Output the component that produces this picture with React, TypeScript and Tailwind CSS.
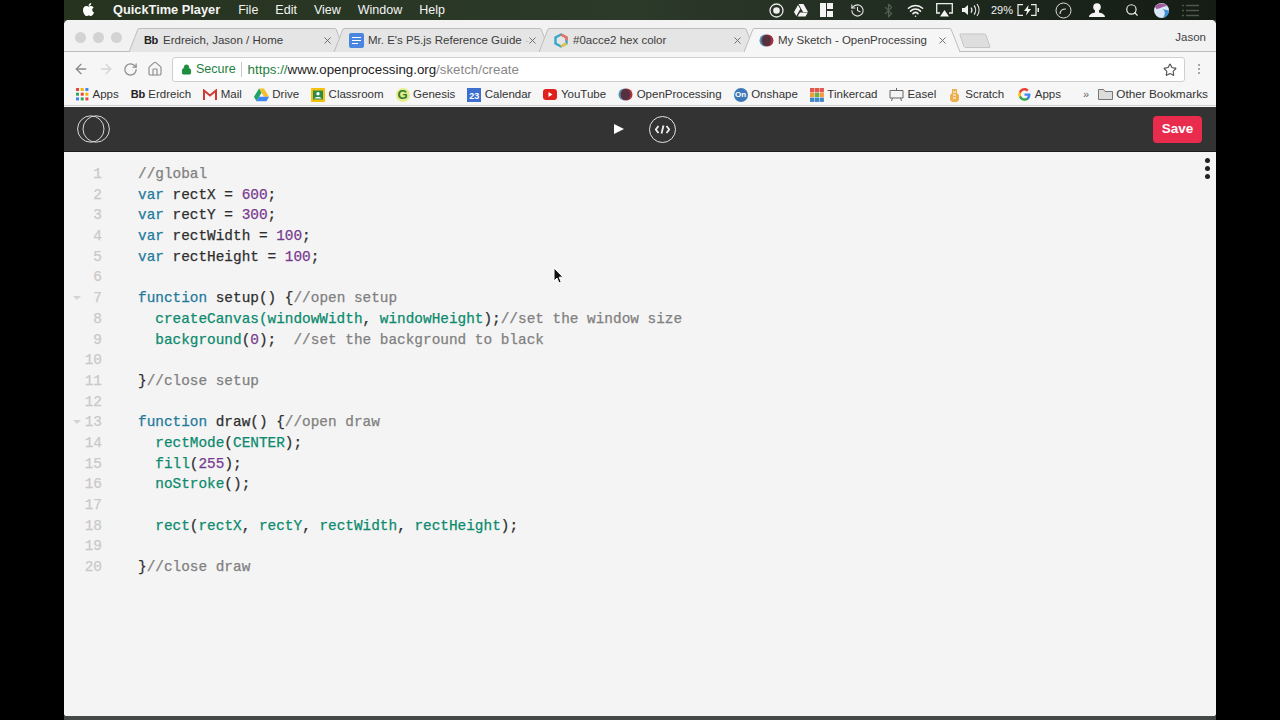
import React from "react";
import { FaApple } from "react-icons/fa";
import { ArrowLeft, ArrowRight, RotateCw, Home, Star, Lock, Wifi, Search, Bluetooth, History, X } from "lucide-react";

const K = "text-[#1f7a9c]";
const N = "text-[#773a8f]";
const F = "text-[#0b8a6d]";
const C = "text-[#808080]";
const D = "text-[#2e2e2e]";

type Seg = [string, string];
const code: Seg[][] = [
  [["//global", C]],
  [["var ", K], ["rectX = ", D], ["600", N], [";", D]],
  [["var ", K], ["rectY = ", D], ["300", N], [";", D]],
  [["var ", K], ["rectWidth = ", D], ["100", N], [";", D]],
  [["var ", K], ["rectHeight = ", D], ["100", N], [";", D]],
  [],
  [["function ", K], ["setup() {", D], ["//open setup", C]],
  [["  createCanvas(windowWidth", F], [", ", D], ["windowHeight", F], [");", D], ["//set the window size", C]],
  [["  background", F], ["(", D], ["0", N], [");  ", D], ["//set the background to black", C]],
  [],
  [["}", D], ["//close setup", C]],
  [],
  [["function ", K], ["draw() {", D], ["//open draw", C]],
  [["  rectMode", F], ["(", D], ["CENTER", F], [");", D]],
  [["  fill", F], ["(", D], ["255", N], [");", D]],
  [["  noStroke", F], ["();", D]],
  [],
  [["  rect", F], ["(", D], ["rectX", F], [", ", D], ["rectY", F], [", ", D], ["rectWidth", F], [", ", D], ["rectHeight", F], [");", D]],
  [],
  [["}", D], ["//close draw", C]],
];

function Tab({ icon, title, suffix, active }: { icon: React.ReactNode; title: string; suffix?: string; active?: boolean }) {
  return (
    <div className={`relative w-[216px] h-[24px] -ml-[11px] first:ml-0 flex items-center pl-[14px] pr-[12px] gap-[4px] ${active ? "z-10" : ""}`}>
      <svg className="absolute inset-0" width="216" height="24" viewBox="0 0 216 24">
        <path d="M0 24 L9 1 Q9.5 0.5 11 0.5 L205 0.5 Q206.5 0.5 207 1 L216 24" fill={active ? "#f6f6f6" : "#e5e5e5"} stroke="#bdbdbd" strokeWidth="1" />
      </svg>
      <span className="relative w-[16px] h-[16px] flex items-center justify-center shrink-0">{icon}</span>
      <span className="relative flex-1 min-w-0 whitespace-nowrap text-[11.500px] text-[#3c3c3c] pt-[1px]">
        {title}
        {suffix && <span className="text-[#c4c4c4]">{suffix}</span>}
      </span>
      <X className="relative shrink-0 text-[#666]" size={11} strokeWidth={2} />
    </div>
  );
}

const OPLogo = () => (
  <svg width="15" height="15" viewBox="0 0 15 15">
    <circle cx="6.500" cy="7.500" r="6" fill="#4d8fb0" />
    <circle cx="8.500" cy="7.500" r="6" fill="#a8323f" />
    <ellipse cx="7.500" cy="7.500" rx="4.600" ry="5.600" fill="#55303f" />
  </svg>
);
const DriveIcon = () => (
  <svg width="15" height="14" viewBox="0 0 15 14">
    <path d="M5 0.500 h5 L15 8.800 h-5z" fill="#f6c02c" />
    <path d="M5 0.500 L0 8.800 L2.500 13.200 L7.500 4.800z" fill="#20a463" />
    <path d="M2.500 13.200 h10 L15 8.800 H5z" fill="#4286f5" />
  </svg>
);
const GIcon = () => (
  <svg width="13" height="13" viewBox="0 0 24 24">
    <path d="M23 12.300c0-.9-.1-1.600-.2-2.300H12v4.400h6.200c-.3 1.500-1.100 2.700-2.300 3.500v2.900h3.700c2.200-2 3.400-5 3.400-8.500z" fill="#4285f4" />
    <path d="M12 23.500c3.100 0 5.700-1 7.600-2.800l-3.700-2.900c-1 .7-2.300 1.100-3.900 1.100-3 0-5.500-2-6.400-4.800H1.800v3c1.900 3.800 5.800 6.400 10.200 6.400z" fill="#34a853" />
    <path d="M5.600 14.100c-.5-1.400-.5-2.900 0-4.300v-3H1.800c-1.600 3.200-1.600 7 0 10.300z" fill="#fbbc05" />
    <path d="M12 4.700c1.700 0 3.200.6 4.400 1.700l3.300-3.300C17.700 1.300 15.100.2 12 .2 7.600.2 3.700 2.800 1.800 6.700l3.800 3c.9-2.900 3.400-5 6.400-5z" fill="#ea4335" />
  </svg>
);

const bookmarks: { icon: React.ReactNode; label: string; gap?: string; extra?: string }[] = [
  {
    label: "Apps",
    icon: (
      <svg width="13" height="13" viewBox="0 0 13 13">
        {[0, 1, 2].flatMap((r) =>
          [0, 1, 2].map((c) => (
            <rect key={`${r}${c}`} x={c * 4.7} y={r * 4.7} width="3" height="3" fill={["#e8453c", "#f4b400", "#4285f4", "#34a853", "#e8453c", "#f4b400", "#4285f4", "#34a853", "#e8453c"][r * 3 + c]} />
          ))
        )}
      </svg>
    ),
  },
  { label: "Erdreich", icon: <span className="text-[11px] font-bold text-[#222] tracking-tight">Bb</span> },
  {
    label: "Mail",
    icon: (
      <svg width="14" height="11" viewBox="0 0 14 11">
        <path d="M1 11V1.500L7 6.500L13 1.500V11" fill="none" stroke="#cf3b33" strokeWidth="2" />
      </svg>
    ),
  },
  { label: "Drive", icon: <DriveIcon /> },
  {
    label: "Classroom",
    icon: (
      <svg width="14" height="14" viewBox="0 0 14 14">
        <rect width="14" height="14" rx="1" fill="#f4c20d" />
        <rect x="2" y="2.500" width="10" height="9" fill="#2e8c4a" />
        <circle cx="7" cy="5.800" r="1.700" fill="#fff" />
        <path d="M3.500 10.500c.5-2 6.500-2 7 0z" fill="#fff" />
      </svg>
    ),
  },
  {
    label: "Genesis",
    icon: (
      <span className="w-[14px] h-[14px] rounded-full bg-[#e6ec8a] flex items-center justify-center text-[13px] font-bold text-[#2f7d32] leading-none">G</span>
    ),
  },
  {
    label: "Calendar",
    icon: (
      <span className="w-[14px] h-[14px] bg-[#3d6fd1] flex items-end justify-center text-[9px] font-bold text-white leading-[11px]">23</span>
    ),
  },
  {
    label: "YouTube",
    icon: (
      <svg width="14" height="11" viewBox="0 0 14 11">
        <rect width="14" height="11" rx="3" fill="#e0201b" />
        <path d="M5.500 3l4 2.500-4 2.500z" fill="#fff" />
      </svg>
    ),
  },
  { label: "OpenProcessing", icon: <OPLogo /> },
  {
    label: "Onshape",
    icon: (
      <span className="w-[14px] h-[14px] rounded-full bg-[#3f78b8] flex items-center justify-center text-[8px] font-bold text-white leading-none">On</span>
    ),
  },
  {
    label: "Tinkercad",
    icon: (
      <svg width="14" height="14" viewBox="0 0 14 14">
        {[0, 1, 2].flatMap((r) =>
          [0, 1, 2].map((c) => (
            <rect key={`${r}${c}`} x={c * 4.8} y={r * 4.8} width="4.300" height="4.300" fill={["#e2574c", "#e2574c", "#e2574c", "#f09a3a", "#62b34d", "#f09a3a", "#3d88c9", "#3d88c9", "#3d88c9"][r * 3 + c]} />
          ))
        )}
      </svg>
    ),
  },
  {
    label: "Easel",
    gap: "gap-[3px]",
    icon: (
      <svg width="15" height="15" viewBox="0 0 15 15">
        <path d="M1 3.500h13v7.500H1zM7.500 3.500V1M3.500 11l-1 3M11.500 11l1 3" fill="#f4f4f4" stroke="#666" strokeWidth="1" />
      </svg>
    ),
  },
  {
    label: "Scratch",
    gap: "gap-[6px]",
    extra: "ml-[2px]",
    icon: (
      <svg width="9" height="14" viewBox="0 0 9 14">
        <path d="M2 1h5v4l2 2v5l-2 2H2L0 12V7l2-2z" fill="#eeb04e" />
        <path d="M3 4h3M3 7h3M3 10h3" stroke="#fff" strokeWidth="1" />
      </svg>
    ),
  },
  { label: "Apps", icon: <GIcon />, extra: "ml-[2px]" },
];

function Bookmarks() {
  return (
    <div className="h-[22px] bg-[#f6f6f6] flex items-center pl-[12px] pr-[8px] text-[11.500px] text-[#333] border-b border-[#cfcfcf]">
      <div className="flex items-center gap-[12px]">
        {bookmarks.map((b, i) => (
          <div key={i} className={`flex items-center ${b.gap ?? "gap-[3.500px]"} ${b.extra ?? ""}`}>
            {b.icon}
            <span>{b.label}</span>
          </div>
        ))}
      </div>
      <span className="ml-auto mr-[9px] text-[11px] text-[#666]">»</span>
      <div className="flex items-center gap-[3px]">
        <svg width="15" height="13" viewBox="0 0 15 13">
          <path d="M.5 11.500V1.500h5l1.500 2h7.500v8z" fill="#dcdcdc" stroke="#777" strokeWidth="1" />
        </svg>
        <span className="text-[11.800px]">Other Bookmarks</span>
      </div>
    </div>
  );
}

function Status() {
  const it = "flex items-center justify-center h-full";
  return (
    <div className="flex items-center h-full ml-auto pr-[12px]">
      <span className={`${it} w-[24px]`}>
        <svg width="15" height="15" viewBox="0 0 15 15"><circle cx="7.500" cy="7.500" r="6.500" fill="none" stroke="#e8e8e8" strokeWidth="1.300" /><circle cx="7.500" cy="7.500" r="3.300" fill="#f0f0f0" /></svg>
      </span>
      <span className={`${it} w-[26px]`}>
        <svg width="14" height="13" viewBox="0 0 14 13"><path d="M4.500 0h5L14 8H9zM4 1L0 8l2.300 4 4-7zM3.500 12.500h8l2.300-4H6z" fill="#f4f4f4" /></svg>
      </span>
      <span className={`${it} w-[24px]`}>
        <svg width="13" height="14" viewBox="0 0 13 14"><path d="M0 0h6v14H0zM7 0h6v6H7zM7 8h6v6H7z" fill="#f4f4f4" /></svg>
      </span>
      <span className={`${it} w-[38px]`}><History size={15} className="text-[#e8e8e8]" strokeWidth={1.700} /></span>
      <span className={`${it} w-[24px]`}><Bluetooth size={15} className="text-[#556055]" /></span>
      <span className={`${it} w-[30px]`}><Wifi size={17} className="text-[#f4f4f4]" strokeWidth={2.200} /></span>
      <span className={`${it} w-[28px]`}>
        <svg width="17" height="14" viewBox="0 0 17 14"><path d="M4 10H.7V.7h15.600V10H13" fill="none" stroke="#eee" strokeWidth="1.300" /><path d="M8.500 7l4.500 6.500H4z" fill="#f4f4f4" /></svg>
      </span>
      <span className={`${it} w-[28px]`}>
        <svg width="20" height="14" viewBox="0 0 20 14"><path d="M0 5h2.500L6 2v10L2.500 9H0z" fill="#f0f0f0" /><path d="M9 4.500a4 4 0 0 1 0 5M12 2.500a7 7 0 0 1 0 9M15 1a10 10 0 0 1 0 12" fill="none" stroke="#e8e8e8" strokeWidth="1.200" /></svg>
      </span>
      <span className="text-[11px] font-medium text-[#f2f2f2] ml-[5px] w-[26px]">29%</span>
      <svg width="22" height="12" viewBox="0 0 22 12"><path d="M6 .7H1v10.600h5M14 .7h5v10.600h-5" fill="none" stroke="#eee" strokeWidth="1.200" /><path d="M11.500 1L7 7h3l-1 4.500L14 5h-3z" fill="#f4f4f4" /><rect x="20.500" y="4" width="1.500" height="4" fill="#eee" /></svg>
      <span className={`${it} w-[26px] ml-[11px]`}>
        <svg width="17" height="17" viewBox="0 0 17 17"><circle cx="8.500" cy="8.500" r="7.500" fill="none" stroke="#ddd" strokeWidth="1" /><path d="M5 12c0-3 1.500-5 6-5" fill="none" stroke="#ddd" strokeWidth="1.200" /></svg>
      </span>
      <span className={`${it} w-[42px]`}>
        <svg width="16" height="14" viewBox="0 0 16 14"><circle cx="8" cy="4" r="3.800" fill="#f4f4f4" /><path d="M0 14c0-3 4-4 6-4.500V7h4v2.500c2 .5 6 1.500 6 4.500z" fill="#f4f4f4" /></svg>
      </span>
      <span className={`${it} w-[28px]`}><Search size={14} className="text-[#eee]" strokeWidth={2} /></span>
      <span className={`${it} w-[30px]`}>
        <svg width="15" height="15" viewBox="0 0 15 15"><circle cx="7.500" cy="7.500" r="7.500" fill="#d9e8f6" /><path d="M1 4a7.500 7.500 0 0 1 12-1C9 3 6 6 2.500 6z" fill="#a35b9b" /><path d="M15 7.500a7.500 7.500 0 0 1-6 7.300C12 11 11 7 8 6z" fill="#3f8fd8" /></svg>
      </span>
      <span className={`${it} w-[28px]`}>
        <svg width="17" height="13" viewBox="0 0 17 13"><path d="M0 1.500h2M4 1.500h13M0 6.500h2M4 6.500h13M0 11.500h2M4 11.500h13" stroke="#4d5a4d" strokeWidth="1.500" /></svg>
      </span>
    </div>
  );
}

export default function App() {
  return (
    <div className="w-[1280px] h-[720px] bg-black flex justify-center overflow-hidden" style={{ fontFamily: '"Liberation Sans", Arial, sans-serif' }}>
      <div className="w-[1152px] h-full flex flex-col bg-[#3f4240]">
        <div className="h-[20px] shrink-0 flex items-center bg-gradient-to-r from-[#26331f] via-[#2c3a2a] to-[#141c14] text-[#f4f4f4] text-[12.500px] pl-[17px] font-medium">
          <FaApple size={15} className="text-white -mt-px" />
          <span className="ml-[17px] font-bold text-[12.800px] text-[#f4f4f4]">QuickTime Player</span>
          <div className="flex items-center gap-[17px] ml-[18px]">
            <span>File</span>
            <span>Edit</span>
            <span>View</span>
            <span>Window</span>
            <span>Help</span>
          </div>
          <Status />
        </div>

        <div className="flex-1 min-h-0 flex flex-col rounded-t-[5px] rounded-b-[3px] overflow-hidden bg-[#f4f4f4]">
          <div className="h-[32px] shrink-0 bg-[#f2f2f2] flex items-end relative">
            <div className="absolute left-[11px] top-[12px] flex gap-[7px]">
              <span className="w-[11px] h-[11px] rounded-full bg-[#d3d3d3]" />
              <span className="w-[11px] h-[11px] rounded-full bg-[#d3d3d3]" />
              <span className="w-[11px] h-[11px] rounded-full bg-[#d3d3d3]" />
            </div>
            <div className="absolute inset-x-0 bottom-0 h-px bg-[#bdbdbd]" />
            <div className="flex items-end ml-[65px]">
              <Tab title="Erdreich, Jason / Home" icon={<span className="text-[11px] font-bold text-[#222] tracking-tight">Bb</span>} />
              <Tab
                title="Mr. E's P5.js Reference Guide"
                suffix=" -"
                icon={
                  <svg width="15" height="15" viewBox="0 0 15 15">
                    <rect width="15" height="15" rx="2" fill="#4a86e0" />
                    <path d="M3 4.500h9M3 7.500h9M3 10.500h6" stroke="#fff" strokeWidth="1.200" />
                  </svg>
                }
              />
              <Tab
                title="#0acce2 hex color"
                icon={
                  <svg width="14" height="15" viewBox="0 0 14 15">
                    <path d="M7 1.500L12.500 4.500V10.500L7 13.500L1.500 10.500V4.500z" fill="none" stroke="#34a8c8" strokeWidth="2.400" />
                    <path d="M7 1.500L12.500 4.500V7.500" fill="none" stroke="#ef6f5a" strokeWidth="2.400" />
                    <path d="M12.500 10.500L7 13.500" fill="none" stroke="#efc13a" strokeWidth="2.400" />
                  </svg>
                }
              />
              <Tab active title="My Sketch - OpenProcessing" icon={<OPLogo />} />
              <svg className="-ml-[1px] mb-[4px]" width="32" height="15" viewBox="0 0 32 15">
                <path d="M1 1h24q1.500 0 2 1l4 12q.2.500-1 .5H7q-1.500 0-2-1L1 2q-.3-1 0-1z" fill="#dedede" stroke="#c5c5c5" strokeWidth="1" />
              </svg>
            </div>
            <span className="absolute right-[10px] top-[9px] text-[11.500px] text-[#444]">Jason</span>
          </div>

          <div className="h-[32px] shrink-0 bg-[#f6f6f6] flex items-center pl-[9px] pr-[15px] pt-[2px]">
            <ArrowLeft size={16} className="text-[#8c8c8c]" strokeWidth={2} />
            <ArrowRight size={16} className="text-[#d4d4d4] ml-[9px]" strokeWidth={2} />
            <RotateCw size={15} className="text-[#8c8c8c] ml-[9px]" strokeWidth={2} />
            <Home size={16} className="text-[#8c8c8c] ml-[9px]" strokeWidth={1.700} />
            <div className="ml-[9px] flex-1 h-[25px] bg-white border border-[#cfcfcf] rounded-[3px] flex items-center pl-[8px] pr-[7px] pt-[1px] text-[12.500px]">
              <Lock size={11} className="text-[#1e8e3e]" fill="#1e8e3e" strokeWidth={2} />
              <span className="ml-[4px] text-[#1e8040]">Secure</span>
              <span className="ml-[5px] w-px h-[15px] bg-[#c8c8c8]" />
              <span className="ml-[6px] text-[13.300px] text-[#1e8040]">https://</span>
              <span className="text-[13.300px] text-[#222]">www.openprocessing.org</span>
              <span className="text-[13.300px] text-[#888]">/sketch/create</span>
              <Star size={14} className="ml-auto text-[#555]" strokeWidth={2} />
            </div>
            <div className="ml-[13px] flex flex-col gap-[2px] w-[3px]">
              <span className="w-[2px] h-[2px] rounded-full bg-[#8c8c8c]" />
              <span className="w-[2px] h-[2px] rounded-full bg-[#8c8c8c]" />
              <span className="w-[2px] h-[2px] rounded-full bg-[#8c8c8c]" />
            </div>
          </div>

          <Bookmarks />

          <div className="h-[1px] shrink-0 bg-[#f8f8f8]" />
          <div className="h-[45px] shrink-0 bg-[#333333] border-b border-[#1c1c1c] flex items-center relative pl-[13px] pr-[14px]">
            <svg width="33" height="28" viewBox="0 0 33 28">
              <circle cx="13.800" cy="14" r="13.200" fill="none" stroke="#d8d8d8" strokeWidth="1" />
              <circle cx="19.200" cy="14" r="13.200" fill="none" stroke="#d8d8d8" strokeWidth="1" />
            </svg>
            <div className="absolute left-[550px] top-[17px] w-0 h-0 border-y-[5px] border-y-transparent border-l-[10px] border-l-white" />
            <div className="absolute left-[585px] top-[9px] w-[27px] h-[27px] rounded-full border border-[#e6e6e6] flex items-center justify-center">
              <svg width="15" height="9" viewBox="0 0 15 9">
                <path d="M3.500 1L.8 4.500 3.500 8M11.500 1l2.700 3.500L11.500 8M8.500.5l-2 8" fill="none" stroke="#f0f0f0" strokeWidth="1.800" />
              </svg>
            </div>
            <button className="ml-auto w-[49px] h-[27px] rounded-[4px] bg-[#e92c4e] text-white font-bold text-[13.500px]">Save</button>
          </div>

          <div className="flex-1 min-h-0 bg-[#f4f4f4] relative pt-[12px]" style={{ fontFamily: '"Liberation Mono", monospace' }}>
            {code.map((line, i) => (
              <div key={i} className="h-[20.700px] leading-[20.700px] flex text-[14.400px] whitespace-pre relative [-webkit-text-stroke:0.25px]">
                {(i === 6 || i === 12) && <span className="absolute left-[9px] top-[8px] w-0 h-0 border-x-[4px] border-x-transparent border-t-[4px] border-t-[#d4d4d4]" />}
                <span className="w-[38px] text-right text-[#c9c9c9] shrink-0">{i + 1}</span>
                <span className="ml-[36px]">
                  {line.map((s, j) => (
                    <span key={j} className={s[1]}>
                      {s[0]}
                    </span>
                  ))}
                </span>
              </div>
            ))}
            <div className="absolute right-[6px] top-[6px] flex flex-col gap-[3px]">
              <span className="w-[5px] h-[5px] rounded-full bg-[#222]" />
              <span className="w-[5px] h-[5px] rounded-full bg-[#222]" />
              <span className="w-[5px] h-[5px] rounded-full bg-[#222]" />
            </div>
            <svg className="absolute left-[489px] top-[115px]" width="12" height="18" viewBox="0 0 12 18">
              <path d="M1 1v13l3-3 2 5 2.200-1-2-4.800H10z" fill="#111" stroke="#fff" strokeWidth="1" />
            </svg>
          </div>
        </div>
        <div className="h-[4px] shrink-0 bg-[#444846]" />
      </div>
    </div>
  );
}
